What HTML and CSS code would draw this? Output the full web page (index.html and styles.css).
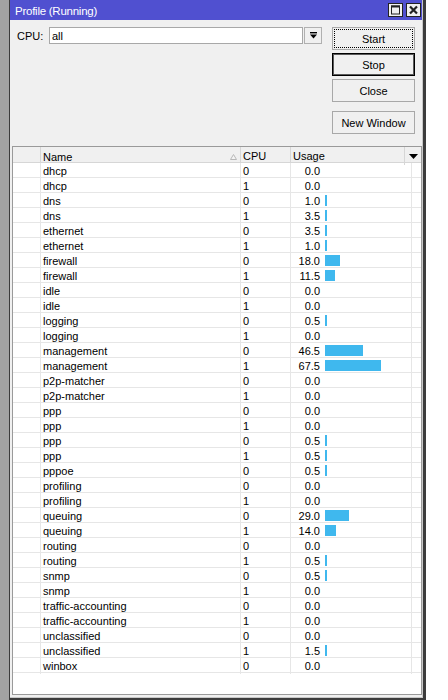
FILE: index.html
```
<!DOCTYPE html>
<html>
<head>
<meta charset="utf-8">
<title>Profile (Running)</title>
<link rel="stylesheet" href="styles.css">
</head>
<body>
<div class="desk">
  <div class="strip"></div>
  <div class="win">
    <div class="titlebar">
      <span class="title">Profile (Running)</span>
      <span class="tbtns">
        <span class="tbtn"><svg width="13" height="12" viewBox="0 0 13 12"><rect x="2.5" y="2" width="8" height="8" fill="none" stroke="#222" stroke-width="1"/><rect x="2" y="1.5" width="9" height="2" fill="#222"/></svg></span>
        <span class="tbtn"><svg width="13" height="12" viewBox="0 0 13 12"><path d="M3 2.5 L10 9.5 M10 2.5 L3 9.5" stroke="#222" stroke-width="2.2" fill="none"/></svg></span>
      </span>
    </div>
    <div class="top">
      <div class="cpu">
        <span class="lbl">CPU:</span>
        <span class="input">all</span>
        <span class="ddbtn"><svg width="7" height="7" viewBox="0 0 7 7"><rect x="0" y="0" width="7" height="1.4" fill="#000"/><path d="M0 2.5 H7 L3.5 6.5 Z" fill="#000"/></svg></span>
      </div>
      <div class="btns">
        <div class="btn focus">Start</div>
        <div class="btn def">Stop</div>
        <div class="btn">Close</div>
        <div class="btn nw">New Window</div>
      </div>
    </div>
    <div class="table">
      <div class="head">
        <span class="h"></span>
        <span class="h hname"><span>Name</span><svg class="sort" width="7" height="6" viewBox="0 0 7 6"><path d="M3.5 0.5 L6.5 5.5 H0.5 Z" fill="#f4f4f4" stroke="#b8b8b8" stroke-width="1"/></svg></span>
        <span class="h">CPU</span>
        <span class="h">Usage</span>
        <span class="h hdd"><svg width="9" height="5" viewBox="0 0 9 5"><path d="M0 0 H9 L4.5 5 Z" fill="#000"/></svg></span>
      </div>
      <div class="body">
        <div class="row"><span class="c"></span><span class="c">dhcp</span><span class="c">0</span><span class="c use"><span class="val">0.0</span></span><span class="e"></span></div>
        <div class="row"><span class="c"></span><span class="c">dhcp</span><span class="c">1</span><span class="c use"><span class="val">0.0</span></span><span class="e"></span></div>
        <div class="row"><span class="c"></span><span class="c">dns</span><span class="c">0</span><span class="c use"><span class="val">1.0</span><span class="bar" style="width:2px"></span></span><span class="e"></span></div>
        <div class="row"><span class="c"></span><span class="c">dns</span><span class="c">1</span><span class="c use"><span class="val">3.5</span><span class="bar" style="width:2px"></span></span><span class="e"></span></div>
        <div class="row"><span class="c"></span><span class="c">ethernet</span><span class="c">0</span><span class="c use"><span class="val">3.5</span><span class="bar" style="width:2px"></span></span><span class="e"></span></div>
        <div class="row"><span class="c"></span><span class="c">ethernet</span><span class="c">1</span><span class="c use"><span class="val">1.0</span><span class="bar" style="width:2px"></span></span><span class="e"></span></div>
        <div class="row"><span class="c"></span><span class="c">firewall</span><span class="c">0</span><span class="c use"><span class="val">18.0</span><span class="bar" style="width:15px"></span></span><span class="e"></span></div>
        <div class="row"><span class="c"></span><span class="c">firewall</span><span class="c">1</span><span class="c use"><span class="val">11.5</span><span class="bar" style="width:10px"></span></span><span class="e"></span></div>
        <div class="row"><span class="c"></span><span class="c">idle</span><span class="c">0</span><span class="c use"><span class="val">0.0</span></span><span class="e"></span></div>
        <div class="row"><span class="c"></span><span class="c">idle</span><span class="c">1</span><span class="c use"><span class="val">0.0</span></span><span class="e"></span></div>
        <div class="row"><span class="c"></span><span class="c">logging</span><span class="c">0</span><span class="c use"><span class="val">0.5</span><span class="bar" style="width:2px"></span></span><span class="e"></span></div>
        <div class="row"><span class="c"></span><span class="c">logging</span><span class="c">1</span><span class="c use"><span class="val">0.0</span></span><span class="e"></span></div>
        <div class="row"><span class="c"></span><span class="c">management</span><span class="c">0</span><span class="c use"><span class="val">46.5</span><span class="bar" style="width:38px"></span></span><span class="e"></span></div>
        <div class="row"><span class="c"></span><span class="c">management</span><span class="c">1</span><span class="c use"><span class="val">67.5</span><span class="bar" style="width:56px"></span></span><span class="e"></span></div>
        <div class="row"><span class="c"></span><span class="c">p2p-matcher</span><span class="c">0</span><span class="c use"><span class="val">0.0</span></span><span class="e"></span></div>
        <div class="row"><span class="c"></span><span class="c">p2p-matcher</span><span class="c">1</span><span class="c use"><span class="val">0.0</span></span><span class="e"></span></div>
        <div class="row"><span class="c"></span><span class="c">ppp</span><span class="c">0</span><span class="c use"><span class="val">0.0</span></span><span class="e"></span></div>
        <div class="row"><span class="c"></span><span class="c">ppp</span><span class="c">1</span><span class="c use"><span class="val">0.0</span></span><span class="e"></span></div>
        <div class="row"><span class="c"></span><span class="c">ppp</span><span class="c">0</span><span class="c use"><span class="val">0.5</span><span class="bar" style="width:2px"></span></span><span class="e"></span></div>
        <div class="row"><span class="c"></span><span class="c">ppp</span><span class="c">1</span><span class="c use"><span class="val">0.5</span><span class="bar" style="width:2px"></span></span><span class="e"></span></div>
        <div class="row"><span class="c"></span><span class="c">pppoe</span><span class="c">0</span><span class="c use"><span class="val">0.5</span><span class="bar" style="width:2px"></span></span><span class="e"></span></div>
        <div class="row"><span class="c"></span><span class="c">profiling</span><span class="c">0</span><span class="c use"><span class="val">0.0</span></span><span class="e"></span></div>
        <div class="row"><span class="c"></span><span class="c">profiling</span><span class="c">1</span><span class="c use"><span class="val">0.0</span></span><span class="e"></span></div>
        <div class="row"><span class="c"></span><span class="c">queuing</span><span class="c">0</span><span class="c use"><span class="val">29.0</span><span class="bar" style="width:24px"></span></span><span class="e"></span></div>
        <div class="row"><span class="c"></span><span class="c">queuing</span><span class="c">1</span><span class="c use"><span class="val">14.0</span><span class="bar" style="width:11px"></span></span><span class="e"></span></div>
        <div class="row"><span class="c"></span><span class="c">routing</span><span class="c">0</span><span class="c use"><span class="val">0.0</span></span><span class="e"></span></div>
        <div class="row"><span class="c"></span><span class="c">routing</span><span class="c">1</span><span class="c use"><span class="val">0.5</span><span class="bar" style="width:2px"></span></span><span class="e"></span></div>
        <div class="row"><span class="c"></span><span class="c">snmp</span><span class="c">0</span><span class="c use"><span class="val">0.5</span><span class="bar" style="width:2px"></span></span><span class="e"></span></div>
        <div class="row"><span class="c"></span><span class="c">snmp</span><span class="c">1</span><span class="c use"><span class="val">0.0</span></span><span class="e"></span></div>
        <div class="row"><span class="c"></span><span class="c">traffic-accounting</span><span class="c">0</span><span class="c use"><span class="val">0.0</span></span><span class="e"></span></div>
        <div class="row"><span class="c"></span><span class="c">traffic-accounting</span><span class="c">1</span><span class="c use"><span class="val">0.0</span></span><span class="e"></span></div>
        <div class="row"><span class="c"></span><span class="c">unclassified</span><span class="c">0</span><span class="c use"><span class="val">0.0</span></span><span class="e"></span></div>
        <div class="row"><span class="c"></span><span class="c">unclassified</span><span class="c">1</span><span class="c use"><span class="val">1.5</span><span class="bar" style="width:2px"></span></span><span class="e"></span></div>
        <div class="row"><span class="c"></span><span class="c">winbox</span><span class="c">0</span><span class="c use"><span class="val">0.0</span></span><span class="e"></span></div>
      </div>
    </div>
  </div>
</div>
</body>
</html>
```
FILE: styles.css
```
* { box-sizing: border-box; }
html, body { margin: 0; padding: 0; background: #ffffff; }
body {
  font-family: "Liberation Sans", Arial, sans-serif;
  font-size: 11px;
  color: #000;
  width: 448px;
  height: 700px;
  overflow: hidden;
}
.desk { display: flex; height: 700px; }
.strip { width: 9px; height: 700px; background: #a3a3a3; flex: none; }
.win {
  width: 417px;
  height: 700px;
  flex: none;
  background: #f0f0f0;
  border-left: 1px solid #3c3c3c;
  border-right: 3px solid #3c3c3c;
  border-bottom: 2px solid #3c3c3c;
  box-shadow: inset -1px -1px 0 #c8c8c8;
  display: flex;
  flex-direction: column;
}
.titlebar {
  height: 20px;
  flex: none;
  background: #5050d0;
  margin-right: 1px;
  display: flex;
  align-items: center;
  justify-content: space-between;
  padding: 0 1px 0 5px;
}
.title { color: #fff; font-size: 11.5px; letter-spacing: -0.25px; padding-top: 2px; }
.tbtns { display: flex; gap: 3px; }
.tbtn {
  width: 15px;
  height: 14px;
  background: #f0f0f0;
  border: 1px solid #222;
  display: flex;
  align-items: center;
  justify-content: center;
}
.tbtn svg { display: block; }
.top {
  display: flex;
  padding: 7px 8px 0 7px;
  flex: none;
}
.cpu { display: flex; align-items: flex-start; height: 17px; }
.lbl { width: 32px; line-height: 19px; }
.input {
  width: 254px;
  height: 17px;
  background: #fff;
  border: 1px solid #a8a8a8;
  padding-left: 2px;
  line-height: 16px;
}
.ddbtn {
  width: 18px;
  height: 17px;
  margin-left: 1px;
  border: 1px solid #b0b0b0;
  background: #f0f0f0;
  display: flex;
  align-items: center;
  justify-content: center;
}
.ddbtn svg { display: block; }
.btns {
  margin-left: auto;
  width: 83px;
  display: flex;
  flex-direction: column;
  gap: 3px;
}
.btn {
  height: 23px;
  border: 1px solid #a8a8a8;
  background: #f0f0f0;
  text-align: center;
  line-height: 22px;
}
.btn.focus { outline: 1px dotted #000; outline-offset: -3px; }
.btn.def { border-color: #000; box-shadow: inset 0 0 0 1px #5a5a5a; }
.btn.nw { margin-top: 6px; }
.table {
  margin: 12px 1px 3px 2px;
  flex: 1;
  border: 1px solid #9a9a9a;
  background: #fff;
  display: flex;
  flex-direction: column;
}
.head {
  display: grid;
  grid-template-columns: 28px 200px 50px 114px 16px;
  height: 16px;
  background: #f0f0f0;
  border-bottom: 1px solid #d6d6d6;
}
.h {
  border-right: 1px solid #d6d6d6;
  padding-left: 2px;
  padding-top: 2px;
  line-height: 15px;
}
.hname { display: flex; justify-content: space-between; align-items: center; padding-right: 3px; padding-top: 0; }
.hname span { line-height: 15px; padding-top: 3px; }
.sort { display: block; margin-top: 2px; }
.hdd { border-right: 0; display: flex; align-items: center; justify-content: center; padding-left: 0; padding-top: 1px; }
.hdd svg { display: block; }
.row {
  display: grid;
  grid-template-columns: 28px 200px 50px 121px 9px;
  height: 15px;
  border-bottom: 1px solid #e6e6e6;
}
.c {
  border-right: 1px solid #e6e6e6;
  padding-left: 2px;
  line-height: 16px;
  white-space: nowrap;
}
.use { display: flex; padding-left: 0; }
.val { width: 29px; text-align: right; }
.bar {
  display: block;
  height: 11px;
  margin-top: 2px;
  margin-left: 5px;
  background: #3fb8ee;
}
```
